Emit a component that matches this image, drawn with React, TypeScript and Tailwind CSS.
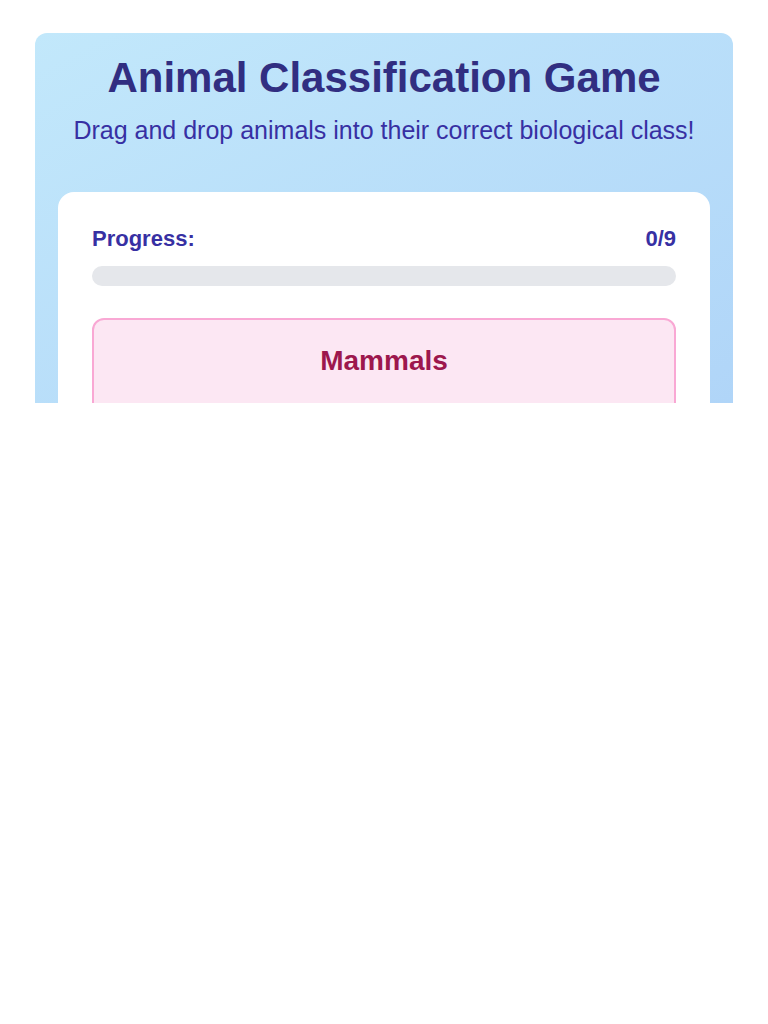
import React from "react";

const categories = [{ id: "mammals", name: "Mammals" }];

export default function App() {
  const placed = 0;
  const total = 9;

  return (
    <div
      className="min-h-screen bg-white px-[35px] pt-[33px]"
      style={{ fontFamily: '"Liberation Sans", Arial, sans-serif' }}
    >
      <div className="h-[370px] overflow-hidden rounded-t-xl bg-gradient-to-br from-[#c2e8fb] to-[#b0d5f8] px-[23px] pt-[19px]">
        <h1 className="text-center text-[42px] font-bold leading-[1.25] text-[#312e81]">
          Animal Classification Game
        </h1>
        <p className="mt-[7px] text-center text-[25px] leading-[1.5] text-[#3730a3]">
          Drag and drop animals into their correct biological class!
        </p>

        <div className="mt-[43px] rounded-2xl bg-white px-[34px] pt-[30px] pb-8">
          <div className="flex items-center justify-between text-[22px] font-bold leading-[1.5] text-[#3730a3]">
            <span>Progress:</span>
            <span>
              {placed}/{total}
            </span>
          </div>
          <div className="mt-[11px] h-5 w-full overflow-hidden rounded-full bg-[#e5e7eb]">
            <div
              className="h-full rounded-full bg-[#6366f1]"
              style={{ width: `${(placed / total) * 100}%` }}
            ></div>
          </div>

          {categories.map((cat) => (
            <div
              key={cat.id}
              className="mt-8 min-h-[200px] rounded-xl border-2 border-[#f9a8d4] bg-[#fce7f3] px-4 pt-[20px]"
            >
              <h2 className="text-center text-[28px] font-bold leading-[1.5] text-[#9d174d]">
                {cat.name}
              </h2>
            </div>
          ))}
        </div>
      </div>
    </div>
  );
}
